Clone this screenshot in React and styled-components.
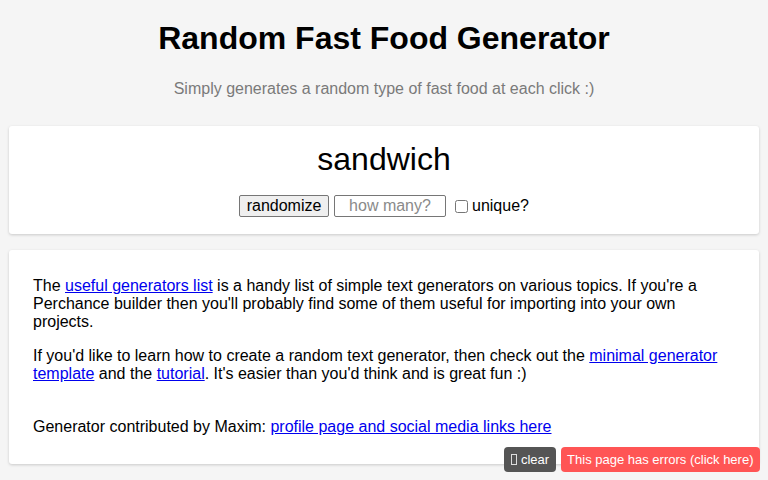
import React from "react";
import styled, { createGlobalStyle } from "styled-components";

const Global = createGlobalStyle`
  html, body { margin: 0; padding: 0; background: #f5f5f5; }
  body { font-family: "Liberation Sans", Arial, sans-serif; color: #000; font-size: 16px; }
`;

const Page = styled.div`
  width: 750px;
  margin: 0 auto;
  display: flex;
  flex-direction: column;
  padding-bottom: 16px;
`;

const Header = styled.header`
  text-align: center;
  padding-top: 20px;
`;

const Title = styled.h1`
  margin: 0;
  font-size: 32px;
  line-height: 37px;
  font-weight: bold;
`;

const Subtitle = styled.div`
  margin-top: 23px;
  font-size: 16px;
  line-height: 18px;
  color: #7a7a7a;
`;

const Card = styled.section`
  background: #fff;
  border-radius: 3px;
  box-shadow: 0 1px 3px rgba(0, 0, 0, 0.18);
  margin-top: ${(p) => p.$top}px;
`;

const ResultCard = styled(Card)`
  padding: 15px 0 17px;
  display: flex;
  flex-direction: column;
  align-items: center;
`;

const Result = styled.div`
  font-size: 32px;
  line-height: 37px;
`;

const Controls = styled.div`
  margin-top: 17px;
  display: flex;
  align-items: center;
  height: 22px;
`;

const Button = styled.button`
  font-family: "Liberation Sans", Arial, sans-serif;
  font-size: 16px;
  height: 22px;
  width: 90px;
  padding: 0;
  background: #efefef;
  border: 1px solid #767676;
  border-radius: 2px;
  color: #000;
`;

const Input = styled.input`
  font-family: "Liberation Sans", Arial, sans-serif;
  font-size: 16px;
  box-sizing: border-box;
  height: 22px;
  width: 112px;
  margin-left: 5px;
  border: 1px solid #767676;
  border-radius: 2px;
  text-align: center;
  padding: 0;
  &::placeholder { color: #8a8a8a; }
`;

const Check = styled.input`
  width: 13px;
  height: 13px;
  margin: 0 4px 0 9px;
`;

const Label = styled.label`
  font-size: 16px;
`;

const InfoCard = styled(Card)`
  padding: 27px 24px 28px;
`;

const P = styled.p`
  margin: 0;
  margin-top: ${(p) => p.$top || 0}px;
  line-height: 18px;
`;

const A = styled.a`
  color: #0000ee;
  text-decoration: underline;
`;

const Floating = styled.div`
  position: fixed;
  right: 8px;
  bottom: 8px;
  display: flex;
  gap: 5px;
`;

const Pill = styled.div`
  height: 25px;
  display: flex;
  align-items: center;
  padding: 0 6.5px;
  border-radius: 4px;
  font-size: 13px;
  color: #fff;
  background: ${(p) => p.$bg};
`;

const Tofu = styled.span`
  display: inline-block;
  width: 4px;
  height: 9px;
  border: 1px solid rgba(255, 255, 255, 0.8);
  margin-right: 4px;
`;

export default function App() {
  return (
    <>
      <Global />
      <Page>
        <Header>
          <Title>Random Fast Food Generator</Title>
          <Subtitle>Simply generates a random type of fast food at each click :)</Subtitle>
        </Header>
        <ResultCard $top={28}>
          <Result>sandwich</Result>
          <Controls>
            <Button>randomize</Button>
            <Input placeholder="how many?" />
            <Check type="checkbox" id="u" />
            <Label htmlFor="u">unique?</Label>
          </Controls>
        </ResultCard>
        <InfoCard $top={16}>
          <P>
            The <A href="#">useful generators list</A> is a handy list of simple text generators on various topics. If you're a Perchance builder then you'll probably find some of them useful for importing into your own projects.
          </P>
          <P $top={16}>
            If you'd like to learn how to create a random text generator, then check out the <A href="#">minimal generator template</A> and the <A href="#">tutorial</A>. It's easier than you'd think and is great fun :)
          </P>
          <P $top={35}>
            Generator contributed by Maxim: <A href="#">profile page and social media links here</A>
          </P>
        </InfoCard>
      </Page>
      <Floating>
        <Pill $bg="#555555"><Tofu />clear</Pill>
        <Pill $bg="#ff5555">This page has errors (click here)</Pill>
      </Floating>
    </>
  );
}
